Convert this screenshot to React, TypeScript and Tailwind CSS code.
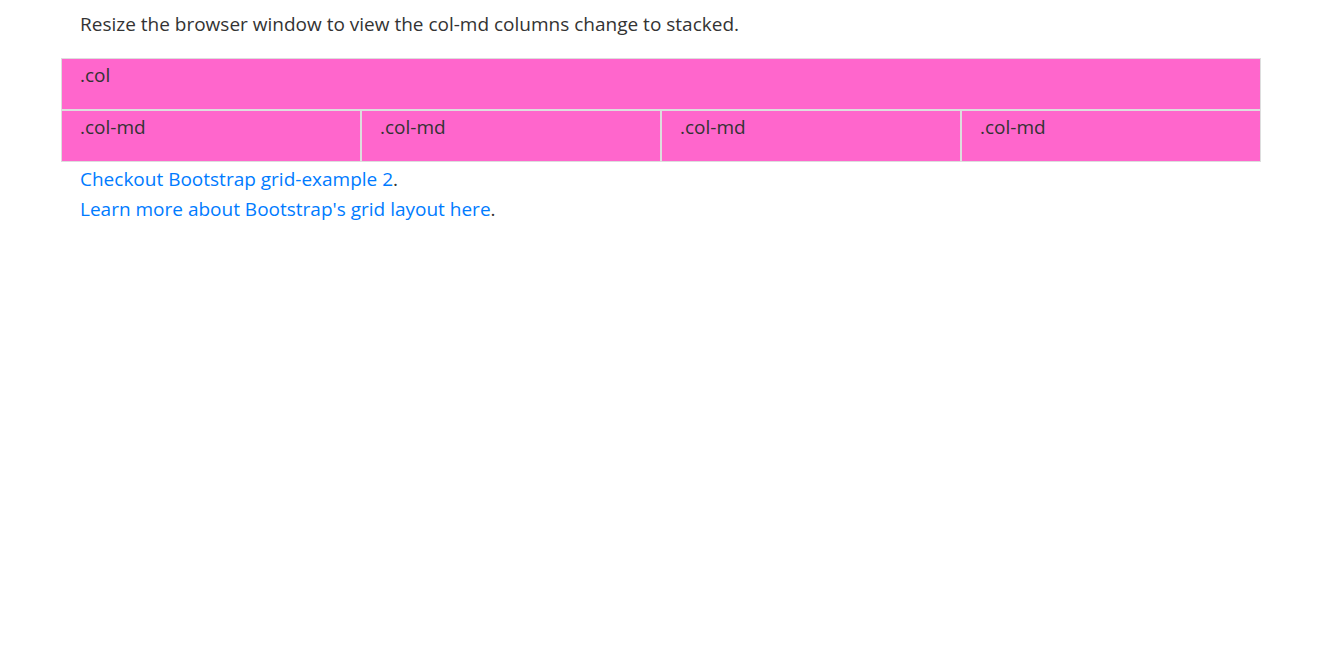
import React from 'react';

const font = { fontFamily: '"Open Sans", "Noto Sans", sans-serif' };

const Cell: React.FC<{ label: string; className?: string }> = ({ label, className = '' }) => (
  <div className={`h-[52px] border border-[#dddddd] bg-[#ff66cc] px-[18px] pt-[1px] ${className}`}>
    {label}
  </div>
);

export default function App() {
  return (
    <div
      className="min-h-screen bg-white pl-[61px] pr-[75px] text-[19px] leading-[30px] text-[#333333]"
      style={font}
    >
      <p className="pl-[19px] pt-[9px]">Resize the browser window to view the col-md columns change to stacked.</p>

      <div className="mt-[19px]">
        <div className="flex">
          <Cell label=".col" className="flex-1" />
        </div>
        <div className="flex">
          {[0, 1, 2, 3].map((i) => (
            <Cell key={i} label=".col-md" className="flex-1" />
          ))}
        </div>
      </div>

      <div className="pl-[19px] pt-[2px]">
        <p>
          <a href="#" className="text-[#007bff]">
            Checkout Bootstrap grid-example 2
          </a>
          .
        </p>
        <p>
          <a href="#" className="text-[#007bff]">
            Learn more about Bootstrap's grid layout here
          </a>
          .
        </p>
      </div>
    </div>
  );
}
